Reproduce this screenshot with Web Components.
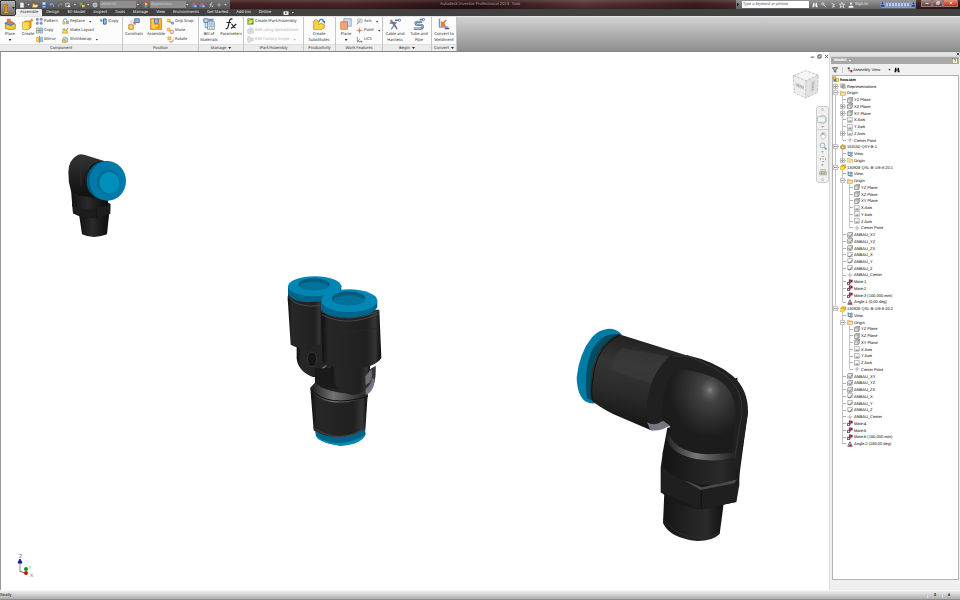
<!DOCTYPE html>
<html lang="en">
<head>
<meta charset="utf-8">
<title>Autodesk Inventor Professional 2013 - how</title>
<style>
html,body{margin:0;height:100%;overflow:hidden}
body{font:4px/5px "Noto Sans","Open Sans",sans-serif;color:#2c2c2c;text-rendering:geometricPrecision;background:#fff}
</style>
</head>
<body>
<inventor-app></inventor-app>
<script>
const ICONS = {
  logo:'<path d="M3 2h7l-1 3v7l3 3H4l1-3V5z" fill="#ffc52e" stroke="#8d5a0a"/><path d="M6 2h4L8 5v8l4 2H8l-2-3z" fill="#d18412"/>',
  page:'<path d="M3 1h7l3 3v11H3z" fill="#f4f4f4" stroke="#777"/>',
  open:'<path d="M1 4h5l1 2h7v8H1z" fill="#e5b64e" stroke="#76602d"/><path d="M3 8h13l-3 6H1z" fill="#f4dc9b"/>',
  save:'<path d="M1 1h14v14H1z" fill="#3868b0"/><path d="M4 1h8v6H4z" fill="#eef"/><path d="M4 10h8v5H4z" fill="#aac"/>',
  undo:'<path d="M3 7c4-5 11-2 9 6" fill="none" stroke="#67a6e8" stroke-width="3"/><path d="M0 8l6-6v8z" fill="#67a6e8"/>',
  redo:'<path d="M13 7C9 2 2 5 4 13" fill="none" stroke="#888" stroke-width="3"/><path d="M16 8l-6-6v8z" fill="#888"/>',
  cursor:'<path d="M2 3h9v9H2z" fill="none" stroke="#ddd" stroke-width="2"/><path d="M8 7l7 5-4 1-1 3z" fill="#fff"/>',
  local:'<path d="M2 2h7v7H2z" fill="#6cb24a"/><path d="M8 8h7v6H8z" fill="#f1c740"/>',
  ball:'<circle cx="8" cy="8" r="6" fill="#b9c4ce" stroke="#eee"/><path d="M8 2v12M2 8h12" stroke="#687887"/>',
  wheel:'<circle cx="8" cy="8" r="7" fill="#e5483f"/><path d="M8 8V1a7 7 0 0 1 7 7z" fill="#f3c92c"/><path d="M8 8h7a7 7 0 0 1-7 7z" fill="#51b84e"/><path d="M8 8v7a7 7 0 0 1-7-7z" fill="#3677d0"/>',
  wheelb:'<circle cx="8" cy="6" r="5" fill="#d8574e"/><path d="M1 7h8v7H1z" fill="#4a83cf"/><path d="M9 9h6v5H9z" fill="#9fc3ee"/>',
  fxw:'<path d="M12 2c-4-1-4 2-5 6s-1 6-4 6M4 6h7M9 9l5 5M14 9l-5 5" fill="none" stroke="#ddd" stroke-width="1.5"/>',
  plus:'<path d="M8 3v10M3 8h10" stroke="#bbb" stroke-width="2"/>',
  place:'<path d="M2 8l5-2 8 2v6l-6 2-7-2z" fill="#f0c63f" stroke="#a6771d"/><path d="M1 7l5-3 8 3-5 3z" fill="#5c9de0" stroke="#326aa9"/><path d="M4 1h5v3l3 1-4 3-4-4z" fill="#ec7834"/>',
  create:'<path d="M1 6l4-2h7v8l-3 3H1z" fill="#e7aa20" stroke="#aa7a12"/><path d="M1 6h8v9H1z" fill="#ffdc4b"/><path d="M13 0l1 2 2 1-2 1-1 2-1-2-2-1 2-1z" fill="#ff8b27"/>',
  pattern:'<g fill="#b7d1ef" stroke="#3569a9" stroke-width="1.5"><path d="M1 1h4v4H1zM10 1h4v4h-4zM1 10h4v4H1zM10 10h4v4h-4z"/></g><path d="M6 3h3M3 6v3M12 6v3M6 12h3" stroke="#f0a323"/>',
  copy:'<path d="M1 2h6v12H1z" fill="#f8dd66" stroke="#3569a9"/><path d="M9 2h6v12H9z" fill="#bdd7f4" stroke="#3569a9"/><path d="M1 8h14" stroke="#3569a9"/>',
  mirror:'<path d="M1 3h5v10H1z" fill="#ffd43b" stroke="#cf832b"/><path d="M10 3h5v10h-5z" fill="#a9cbed" stroke="#3d73b1"/><path d="M8 0v16" stroke="#ce3c2c" stroke-width="1.5"/>',
  replace:'<path d="M2 8h5v6H2z" fill="#ffce37" stroke="#b3821f"/><path d="M10 7h5v6h-5z" fill="#9dc4ec" stroke="#386da7"/><path d="M3 6c1-6 8-5 8-1" fill="none" stroke="#3978bc" stroke-width="2"/>',
  layout:'<path d="M1 10l4-4 8 3v5H1z" fill="#ffd43b" stroke="#a77a1c"/><path d="M1 5h7M10 8l4-6" stroke="#4a9a3d" stroke-width="2"/>',
  shrink:'<path d="M2 5l4-3 7 3v8l-5 2-6-3z" fill="#bfd0df" stroke="#56728d"/><path d="M1 9h6v6H1z" fill="#ffd23a" stroke="#a77a1c"/>',
  icopy:'<path d="M2 2v5h4M8 2h6v12H8z" fill="#9fc1e6" stroke="#295b9d" stroke-width="2"/>',
  constrain:'<path d="M1 9h6v6H1z" fill="#ffd54a" stroke="#a77d21"/><path d="M9 1h6v5H9z" fill="#91b9e7" stroke="#2c63a6"/><path d="M4 9V4h5" fill="none" stroke="#9db9d8" stroke-width="1"/><path d="M6 6l4-1v5z" fill="#ea5d23"/>',
  assemble:'<path d="M1 1h5v4h5V1h4v14H1z" fill="#ffd43b" stroke="#d4782a" stroke-width="1.5"/><path d="M6 1h5v6H6z" fill="#8db8ea" stroke="#3e73b4"/><path d="M5 8h7v5H7" fill="none" stroke="#ee6a25" stroke-width="1.5"/>',
  grip:'<path d="M1 3h6v6H1z" fill="#ffd43b" stroke="#b0821f"/><path d="M10 9h5v5h-5z" fill="#93bce7" stroke="#316aa8"/><path d="M6 7l4 4" stroke="#cb3c30" stroke-width="2"/>',
  move:'<path d="M1 3h6v6H1z" fill="#ffd43b" stroke="#b0821f"/><circle cx="11" cy="11" r="4" fill="#f9eaea" stroke="#d05349" stroke-width="1.5"/>',
  rotate:'<path d="M2 2h7v6H2z" fill="#ffd43b" stroke="#b0821f"/><path d="M5 11c3 5 9 3 9-3" fill="none" stroke="#d05349" stroke-width="2"/>',
  bom:'<path d="M1 1h6v5H1z" fill="#b5cee9" stroke="#466f9f"/><path d="M3 6v7h3" fill="none" stroke="#466f9f"/><path d="M6 5h9v10H6z" fill="#fff" stroke="#58799e"/><path d="M6 8h9M6 11h9M9 5v10M12 5v10" stroke="#7f9bb9"/><path d="M8 1h6v3H8z" fill="#6896cc"/>',
  fx:'<path d="M10 1.500C6 0 6 4 5 8s-1 7-4 6M2 6h6M8 8c3-1 2 6 6 5M15 8l-7 6" fill="none" stroke="#222" stroke-width="1.500"/>',
  ipart:'<path d="M1 1h14v14H1z" fill="#3f9435"/><path d="M3 8l4-4h6v5l-4 4H3z" fill="#f3d94a"/><path d="M3 3h3v2H3z" fill="#fff"/>',
  sheet:'<path d="M2 5h12v9H2zM5 2h6v3" fill="#eee" stroke="#bbb" stroke-width="1.5"/><circle cx="8" cy="9" r="3" fill="#ccc"/>',
  scope:'<path d="M2 2h5v12H2zM9 5h5v6H9z" fill="#eee" stroke="#bbb" stroke-width="1.5"/>',
  subst:'<path d="M1 4l3-2 3 2v5l4-2 4 2v4l-5 3H2l-1-1z" fill="#ffd43b" stroke="#b38319"/><path d="M8 5c1-4 5-4 6-1" fill="none" stroke="#3574be" stroke-width="1.7"/><path d="M12 4h4v4z" fill="#3574be"/>',
  planeb:'<path d="M5 1h10v10H5z" fill="#c9ddf3" stroke="#7b99bb"/><path d="M1 5h9v10H1z" fill="#f59b63" fill-opacity=".85" stroke="#cf6e35"/>',
  axisb:'<path d="M4 2h10v9H4z" fill="#dbe7f4" stroke="#7d96b2"/><path d="M2 15L10 4" stroke="#e0702e" stroke-width="1.800"/>',
  pointb:'<path d="M8 1v14M1 8h14" stroke="#e98b4d" stroke-width="1.6"/><path d="M8 4l4 4-4 4-4-4z" fill="#e47c3a"/>',
  ucs:'<path d="M3 2v11h11" fill="none" stroke="#3267b2" stroke-width="1.5"/><path d="M3 13l6-6" stroke="#39983e" stroke-width="1.5"/><path d="M11 10l4 3-4 2z" fill="#d33b2c"/>',
  cable:'<path d="M2 3l9 12M10 5L3 15M1 7l6-1 2 2" fill="none" stroke="#667b92" stroke-width="1.700"/><path d="M3 2l7 10" stroke="#a94a8c"/><path d="M8 3h5" stroke="#3a75bb" stroke-width="2"/><circle cx="14" cy="3" r="1.500" fill="#fff" stroke="#2866b1"/>',
  tube:'<path d="M12 5H6c-4 0-3 4 0 4h4c4 0 4 5 0 5H1" fill="none" stroke="#566e87" stroke-width="3"/><path d="M12 5H6c-4 0-3 4 0 4h4c4 0 4 5 0 5H1" fill="none" stroke="#c9dae9"/><path d="M9 2h5" stroke="#3a75bb" stroke-width="2"/><circle cx="14" cy="2" r="1.500" fill="#fff" stroke="#2866b1"/>',
  weld:'<path d="M2 1v11h11" fill="none" stroke="#8398ad" stroke-width="2"/><path d="M4 5l6 6M11 3L6 8" stroke="#df572b" stroke-width="1.500"/><path d="M4 6h5v5H4z" fill="#ee7833"/><path d="M9 14h6" stroke="#7144a3" stroke-width="2"/>',
  video:'<rect x="1" y="3" width="14" height="10" rx="2" fill="#e6e6e6"/><path d="M6 5l5 3-5 3z" fill="#444"/>',
  bino:'<path d="M3 2h3l1 5h2l1-5h3l2 12H10V9H6v5H1z" fill="currentColor"/>',
  key:'<circle cx="5" cy="5" r="3" fill="none" stroke="#eee" stroke-width="2"/><path d="M7 7l7 7" stroke="#eee" stroke-width="2.500"/>',
  sat:'<path d="M4 3l8 4-5 3 5 2-6 2" fill="none" stroke="#eee" stroke-width="2"/>',
  star:'<path d="M8 1l2 5h5l-4 3 2 6-5-3-5 3 2-6-4-3h5z" fill="none" stroke="#eee" stroke-width="2"/>',
  user:'<circle cx="8" cy="4" r="3" fill="currentColor"/><path d="M1 15c0-8 14-8 14 0z" fill="currentColor"/>',
  funnel:'<path d="M1 2h14l-5 6v6l-4-2V8z" fill="#ddd" stroke="#333" stroke-width="2"/>',
  asmview:'<path d="M2 1h5v5H2z" fill="#444"/><path d="M5 6v4h4" fill="none" stroke="#555" stroke-width="1.500"/><path d="M9 8h5v6H9z" fill="#a51c30"/>',
  help:'<rect x="1" y="1" width="14" height="14" fill="#fff6c6" stroke="#555"/><path d="M5 5c1-3 6-2 5 1l-2 2v2M8 12v1" fill="none" stroke="#333" stroke-width="1.500"/>',
  asm:'<path d="M1 2h7v7H1z" fill="#f6bd28" stroke="#8e6412"/><path d="M1 9h7v6H1z" fill="#4d79ad"/><path d="M8 7h7v8H8z" fill="#ffd738" stroke="#8e6412"/>',
  rep:'<path d="M1 2h10v10H1z" fill="#f0dfb1" stroke="#8a7447"/><path d="M5 5h9v9H5z" fill="#b9c8db" stroke="#65584a"/><path d="M8 7v5" stroke="#7d3e20" stroke-width="2"/>',
  folder:'<path d="M1 3h5l2 2h7v9H1z" fill="#f5d18c" stroke="#b88632"/><path d="M4 7h12l-3 7H1z" fill="#ffeab9" stroke="#b88632"/>',
  closed:'<path d="M1 3h5l2 2h7v9H1z" fill="#f6d79e" stroke="#c09048"/>',
  plane:'<path d="M5 1h10v9l-4 5H1V5z" fill="#dedede" stroke="#666" stroke-width="1.500"/><path d="M1 5h10v10M11 5l4-4" fill="none" stroke="#666" stroke-width="1.500"/>',
  axis:'<path d="M1 1h13v13H1z" fill="#f7f7f7" stroke="#888" stroke-width="1.500"/><path d="M4 11h8" stroke="#444" stroke-width="2"/>',
  point:'<path d="M8 1v14M1 8h14" stroke="#999" stroke-width="1.500"/><path d="M6 6h4v4H6z" fill="#fff" stroke="#888"/>',
  part:'<path d="M1 6l5-4h9v7l-5 6H1z" fill="#f5a81c" stroke="#b8740c"/><path d="M1 7h9v8H1z" fill="#ffe13f"/>',
  multi:'<path d="M1 5l6-4 8 4v6l-7 4-7-4z" fill="#f1b830" stroke="#80591a"/><path d="M4 6h7v6H4z" fill="#ece6cc" stroke="#7b6230"/>',
  view:'<path d="M3 1v11h5M3 5h6" fill="none" stroke="#2a5f8c" stroke-width="2"/><path d="M9 3h5v4H9zM8 10h6v4H8z" fill="#b7d7ea" stroke="#37627f" stroke-width="1.500"/>',
  wplane:'<path d="M4 1h11v9l-3 4H1V5z" fill="#e2e2e2" stroke="#666" stroke-width="1.500"/><path d="M4 8l4 5 6-9" fill="none" stroke="#666" stroke-width="1.800"/>',
  waxis:'<path d="M2 1h12v11H2z" fill="#f7f7f7" stroke="#888" stroke-width="1.500"/><path d="M3 10l4 4 7-9" fill="none" stroke="#444" stroke-width="1.800"/>',
  mate:'<path d="M1 9h6v6H1z" fill="#fff" stroke="#222" stroke-width="2"/><path d="M5 1h5v11H5z" fill="#c3183a"/><path d="M10 2h5v7h-5z" fill="#343c6b"/>',
  angle:'<path d="M2 14L8 2l6 12z" fill="#fff" stroke="#333a68" stroke-width="2"/><path d="M8 7l6 7H4z" fill="#d32a3d"/>',
  orbit:'<circle cx="8" cy="8" r="6" fill="#e9f0ea" stroke="#a5b4b4"/><path d="M1 4h11v8H1z" fill="#f3f8f5" stroke="#9fb8ac"/>',
  hand:'<path d="M3 8V5l2 2V2h2v4-5h2v5l1-4h2l-1 5 2-1 1 1-4 7H6z" fill="#fff" stroke="#999"/>',
  mag:'<circle cx="7" cy="7" r="5" fill="#e3eef7" stroke="#93a0ad" stroke-width="1.500"/><path d="M11 11l4 4" stroke="#888" stroke-width="2.500"/>',
  cross:'<path d="M8 1l3 3H5zM8 15l-3-3h6zM1 8l3-3v6zM15 8l-3 3V5z" fill="#aaa"/><circle cx="8" cy="8" r="2" fill="#ccc"/>',
  face:'<path d="M3 3h10v4H3z" fill="#d8dfa6" stroke="#aaa"/><path d="M1 7h14v7H1z" fill="#c0cc93" stroke="#aaa"/><path d="M4 9h3v3H4zM9 9h3v3H9z" fill="#99a"/>',
  min:'<path d="M2 10h12" stroke="currentColor" stroke-width="3"/>',
  max:'<path d="M5 2h9v9H5zM2 5h9v9H2z" fill="none" stroke="currentColor" stroke-width="2"/>',
  close:'<path d="M3 3l10 10M13 3L3 13" stroke="currentColor" stroke-width="3"/>'
};

function define(name, css, html){
  customElements.define(name, class extends HTMLElement{
    connectedCallback(){
      if(this.shadowRoot) return;
      const root = this.attachShadow({mode:'open'});
      root.innerHTML = `<style>*{box-sizing:border-box}button,input,select{font:inherit;color:inherit;margin:0;padding:0;border:0;background:none;border-radius:0;outline:0;text-rendering:inherit;min-width:0}${css}</style>${typeof html === 'function' ? html(this) : html}`;
    }
  });
}

define('ui-icon', ':host{display:block;flex:none;width:var(--s,6px);height:var(--s,6px)}svg{display:block;width:100%;height:100%}',
  el => `<svg viewBox="0 0 16 16" aria-hidden="true">${ICONS[el.getAttribute('name')] || ''}</svg>`);

define('drop-arrow', ':host{display:block;flex:none;width:3px;height:2px;background:currentColor;clip-path:polygon(0 0,100% 0,50% 100%)}', '');

define('big-button', `
  :host{display:block;flex:none;width:var(--w,20px)}
  button{display:flex;flex-direction:column;align-items:center;width:100%;padding-top:1px;white-space:nowrap}
  ui-icon{--s:12px;margin-bottom:2px}
  .t{display:block;text-align:center;line-height:6px}
  drop-arrow{margin-top:1px}`,
  el => `<button><ui-icon name="${el.getAttribute('icon')}"></ui-icon><span class="t"><slot></slot></span>${el.hasAttribute('menu') ? '<drop-arrow></drop-arrow>' : ''}</button>`);

define('small-button', `
  :host{display:block}
  button{display:flex;align-items:center;gap:1px;height:9px;white-space:nowrap}
  button:disabled{color:#b4b4b4}
  ui-icon{--s:7px}
  drop-arrow{margin-left:3px}`,
  el => `<button ${el.hasAttribute('off') ? 'disabled' : ''}><ui-icon name="${el.getAttribute('icon')}"></ui-icon><slot></slot>${el.hasAttribute('menu') ? '<drop-arrow></drop-arrow>' : ''}</button>`);

define('ribbon-column', ':host{display:flex;flex-direction:column;flex:none;width:var(--w,auto)}', '<slot></slot>');

define('ribbon-panel', `
  :host{display:flex;flex-direction:column;flex:none;width:var(--w);background:#fcfcfc;border-right:1px solid #c6c6c6}
  .body{display:flex;flex:1;min-height:0}
  .label{display:flex;justify-content:center;align-items:center;gap:2px;height:7px;background:#ebebeb;border-top:1px solid #dedede}`,
  el => `<div class="body"><slot></slot></div><div class="label">${el.getAttribute('label')}${el.hasAttribute('menu') ? '<drop-arrow></drop-arrow>' : ''}</div>`);

define('ribbon-bar', `
  :host{display:flex;height:36px;background:linear-gradient(#d2d2d2,#8f8f8f);border-top:1px solid #e4e4e4;border-bottom:1px solid #868686}`,
  `<ribbon-panel label="Component" style="--w:123px">
    <big-button icon="place" menu style="--w:20px">Place</big-button><big-button icon="create" style="--w:16px">Create</big-button>
    <ribbon-column style="--w:26px"><small-button icon="pattern">Pattern</small-button><small-button icon="copy">Copy</small-button><small-button icon="mirror">Mirror</small-button></ribbon-column>
    <ribbon-column style="--w:38px"><small-button icon="replace" menu>Replace</small-button><small-button icon="layout">Make Layout</small-button><small-button icon="shrink" menu>Shrinkwrap</small-button></ribbon-column>
    <ribbon-column><small-button icon="icopy">iCopy</small-button></ribbon-column>
  </ribbon-panel>
  <ribbon-panel label="Position" style="--w:76px">
    <big-button icon="constrain" style="--w:22px">Constrain</big-button><big-button icon="assemble" style="--w:22px">Assemble</big-button>
    <ribbon-column><small-button icon="grip">Grip Snap</small-button><small-button icon="move">Move</small-button><small-button icon="rotate">Rotate</small-button></ribbon-column>
  </ribbon-panel>
  <ribbon-panel label="Manage" menu style="--w:45px">
    <big-button icon="bom" style="--w:20px">Bill of<br>Materials</big-button><big-button icon="fx" style="--w:24px">Parameters</big-button>
  </ribbon-panel>
  <ribbon-panel label="iPart/Assembly" style="--w:60px">
    <ribbon-column style="padding-left:3px"><small-button icon="ipart">Create iPart/Assembly</small-button><small-button icon="sheet" off>Edit using Spreadsheet</small-button><small-button icon="scope" off menu>Edit Factory Scope</small-button></ribbon-column>
  </ribbon-panel>
  <ribbon-panel label="Productivity" style="--w:32px"><big-button icon="subst" style="--w:30px">Create<br>Substitutes</big-button></ribbon-panel>
  <ribbon-panel label="Work Features" style="--w:47px">
    <big-button icon="planeb" menu style="--w:20px">Plane</big-button>
    <ribbon-column><small-button icon="axisb" menu>Axis</small-button><small-button icon="pointb" menu>Point</small-button><small-button icon="ucs">UCS</small-button></ribbon-column>
  </ribbon-panel>
  <ribbon-panel label="Begin" menu style="--w:49px"><big-button icon="cable" style="--w:24px">Cable and<br>Harness</big-button><big-button icon="tube" style="--w:24px">Tube and<br>Pipe</big-button></ribbon-panel>
  <ribbon-panel label="Convert" menu style="--w:25px"><big-button icon="weld" style="--w:24px">Convert to<br>Weldment</big-button></ribbon-panel>`);

define('title-bar', `
  :host{display:flex;align-items:center;height:9px;color:#ddd;background:linear-gradient(#fff2,#0000 40%,#0004),linear-gradient(90deg,#3b1a1c,#4a2526 35%,#281012 48%,#5a3636 60%,#3d1c1e 72%,#5c3937 80%,#3a1819)}
  .quick{display:flex;align-items:center;justify-content:space-between;width:214px;height:100%;padding:0 3px;background:linear-gradient(#777,#555)}
  .quick button{display:flex;align-items:center;gap:2px}
  select{appearance:none;height:7px;width:36px;padding-left:1px;background:#8e8e8e;color:#ccc;font-style:italic;line-height:7px}
  label{display:flex;align-items:center;gap:0}
  h1{flex:1;margin:0;padding-right:6px;font:inherit;color:#aaa1a1;text-align:center;white-space:pre}
  .info{display:flex;align-items:center;gap:3px;height:100%;width:180px;padding-left:1px;background:linear-gradient(#969696,#626262)}
  input{width:67px;height:7px;padding:0 1px;background:#fff;color:#444;font-style:italic}
  input::placeholder{color:#555;opacity:1}
  .go{width:2px;height:4px;background:#111;clip-path:polygon(0 0,100% 50%,0 100%)}
  .sign{display:flex;align-items:center;gap:1px;white-space:nowrap;color:#f2f2f2}
  .badge{display:flex;align-items:center;justify-content:space-between;width:36px;height:6px;margin-left:auto;border-radius:2px;background:#8499bd;color:#23497f}
  .badge ui-icon{--s:5px}.badge i{flex:1;height:3px;margin:0 1px;border-radius:2px;background:repeating-linear-gradient(90deg,#b9cae4 0 2px,#7893ba 2px 3px)}
  .win{display:flex;gap:0;padding:0 2px 2px 5px;color:#fff}
  .win button{display:grid;place-items:center;width:11px;height:7px;background:linear-gradient(#a98f8e,#5f4241);border:1px solid #927877;border-top:0}
  .win .x{width:15px;background:linear-gradient(#e1917f,#c62b13)}
  .win ui-icon{--s:4px}`,
  `<div class="quick">
    <button aria-label="New"><ui-icon name="page"></ui-icon><drop-arrow></drop-arrow></button><button aria-label="Open"><ui-icon name="open"></ui-icon></button><button aria-label="Save"><ui-icon name="save"></ui-icon></button><button aria-label="Undo"><ui-icon name="undo"></ui-icon></button><button aria-label="Redo"><ui-icon name="redo"></ui-icon></button><button aria-label="Select"><ui-icon name="cursor"></ui-icon><drop-arrow></drop-arrow></button><button aria-label="Update"><ui-icon name="local"></ui-icon><drop-arrow></drop-arrow></button><button aria-label="Sphere"><ui-icon name="ball"></ui-icon></button>
    <label><select aria-label="Material"><option>Material</option></select><drop-arrow></drop-arrow></label><button aria-label="Colour"><ui-icon name="wheel"></ui-icon></button>
    <label><select aria-label="Appearance"><option>Appearance</option></select><drop-arrow></drop-arrow></label><button aria-label="Adjust"><ui-icon name="wheelb"></ui-icon></button><button aria-label="Clear"><ui-icon name="wheelb"></ui-icon></button><button aria-label="Parameters"><ui-icon name="fxw"></ui-icon></button><button aria-label="Customize"><ui-icon name="plus"></ui-icon><drop-arrow></drop-arrow></button>
  </div>
  <h1>Autodesk Inventor Professional 2013   how</h1>
  <div class="info"><span class="go"></span><input aria-label="Search" placeholder="Type a keyword or phrase"><ui-icon name="bino" style="color:#eee"></ui-icon><ui-icon name="key"></ui-icon><ui-icon name="sat"></ui-icon><ui-icon name="star"></ui-icon><button class="sign"><ui-icon name="user"></ui-icon>Sign In</button><span class="badge"><ui-icon name="user"></ui-icon><i></i><ui-icon name="user"></ui-icon></span></div>
  <div class="win"><button aria-label="Minimize"><ui-icon name="min"></ui-icon></button><button aria-label="Restore"><ui-icon name="max"></ui-icon></button><button class="x" aria-label="Close"><ui-icon name="close"></ui-icon></button></div>`);

define('tab-strip', `
  :host{display:flex;align-items:stretch;height:7px;background:#414141;color:#f0f0f0}
  button{padding:0 4px;line-height:6px;display:flex;align-items:center;gap:2px}
  .on{background:#ededed;color:#222;border-radius:1px 1px 0 0}`,
  () => ['Assemble','Design','3D Model','Inspect','Tools','Manage','View','Environments','Get Started','Add-Ins','Online'].map((t,i)=>`<button${i?'':' class="on"'}>${t}</button>`).join('') + '<button style="margin-left:4px" aria-label="Video"><ui-icon name="video"></ui-icon><drop-arrow></drop-arrow></button>');

define('app-header', `
  :host{display:grid;grid-template-columns:16px 1fr;grid-template-rows:9px 7px}
  .app{grid-row:1/3;display:flex;align-items:center;justify-content:center;gap:0;background:linear-gradient(#b5b5b5,#6b6b6b);border:1px solid #333;border-radius:0 0 2px 0;color:#222}
  .app ui-icon{--s:11px}`,
  '<button class="app" aria-label="Application menu"><ui-icon name="logo"></ui-icon><drop-arrow></drop-arrow></button><title-bar></title-bar><tab-strip></tab-strip>');

const PARTS = {
  elbowSmall: ['45 36 195 264', `
    <defs><linearGradient id="a"><stop stop-color="#121212"/><stop offset=".45" stop-color="#2a2a2a"/><stop offset="1" stop-color="#0c0c0c"/></linearGradient><linearGradient id="b" x2="0" y2="1"><stop stop-color="#343434"/><stop offset="1" stop-color="#0d0d0d"/></linearGradient></defs>
    <path d="M86 215l10 68q34 16 75 0l7-68z" fill="url(#a)"/>
    <path d="M66 192l3 28 25 11 45 4 41-14 1-30-30-15z" fill="#171717"/><path d="M69 192q35 18 75 10l37-11v30l-42 13-45-3-25-11z" fill="#1d1d1d"/><path d="M139 204v30" stroke="#090909"/>
    <path d="M63 150l4 49q40 16 107-3v-48z" fill="url(#a)"/><path d="M63 152q38 17 110-3" fill="none" stroke="#333" stroke-width="2"/>
    <path d="M55 95Q56 60 80 47q8-8 25-2l65 20-8 116-42-9q-12-4-29-3l-28-15q-9-30-8-59z" fill="url(#b)"/>
    <path d="M80 49Q59 62 60 98M105 47q-18 20-12 90" fill="none" stroke="#303030" stroke-width="2"/>
    <ellipse cx="158" cy="122" rx="56" ry="58" fill="#111"/><path d="M118 73q-22 42-2 81M124 67q-24 45-4 93" fill="none" stroke="#333" stroke-width="2"/>
    <ellipse cx="166" cy="122" rx="56" ry="59" fill="#005c7d"/>
    <ellipse cx="173" cy="123" rx="55" ry="59" fill="#007aa8"/><ellipse cx="175" cy="125" rx="34" ry="36" fill="#006a90"/><ellipse cx="178" cy="128" rx="30" ry="32" fill="#008fbd"/>`],
  yPiece: ['45 24 300 525', `
    <defs><linearGradient id="a"><stop stop-color="#101010"/><stop offset=".12" stop-color="#272727"/><stop offset=".75" stop-color="#202020"/><stop offset=".9" stop-color="#353535"/><stop offset="1" stop-color="#0b0b0b"/></linearGradient><linearGradient id="m"><stop stop-color="#181818"/><stop offset=".4" stop-color="#747474"/><stop offset="1" stop-color="#1b1b1b"/></linearGradient></defs>
    <path d="M80 238v43q5 38 48 55h60v-95z" fill="url(#a)"/><path d="M55 85l-2 15 9 139q28 17 98 13V85z" fill="url(#a)"/>
    <path d="M54 94q22 36 102 28" fill="none" stroke="#494949" stroke-width="3"/>
    <path d="M54 65v20q8 24 57 27l52-4 51-25V61z" fill="#006489"/><ellipse cx="134" cy="64" rx="80" ry="30" fill="#0086b4"/><ellipse cx="132" cy="58" rx="47" ry="18" fill="#005d7e"/><ellipse cx="132" cy="63" rx="42" ry="13" fill="#00719a"/>
    <path d="M112 262q10-26 42-22l30 60-26 25-36-20z" fill="#252525"/><ellipse cx="126" cy="283" rx="14" ry="22" fill="#171717" stroke="#353535" stroke-width="3"/><path d="M147 315l25-18q-6 14-24 24z" fill="#74727c"/>
    <path d="M134 310h150l3 90H125l10-45z" fill="#1a1a1a"/>
    <path d="M121 368l10 128q70 54 155-1l8-120z" fill="url(#a)"/><path d="M121 368l15-16q30 38 150 34l8 6q-54 28-115 18-44-8-58-42z" fill="url(#m)"/><path d="M122 372q50 58 172 22" fill="none" stroke="#111" stroke-width="3"/>
    <path d="M284 322l33-20q3 58-20 76-10 12-26 13z" fill="#35343c"/><path d="M287 372q16-12 20-34l8 8q-6 38-28 44z" fill="#74747f"/>
    <path d="M183 301l2 30q10 52 62 59 40-3 47-34l8-62z" fill="url(#a)"/><path d="M304 312q6 20-4 40l-13 8-1-26z" fill="#6c6c78"/>
    <path d="M136 499q70 36 149-6l2 15q-12 30-77 34-60-8-73-31z" fill="#006285"/><path d="M137 514q70 42 149-5-15 31-76 33-59-7-73-28z" fill="#008ab8"/>
    <path d="M130 488q78 53 156 0" fill="none" stroke="#444" stroke-width="3"/>
    <path d="M154 137l3 153q19 20 83 21 76-2 94-32l-6-145z" fill="url(#a)"/><path d="M156 149q75 40 171-3M154 140q80 39 173-1" fill="none" stroke="#454545" stroke-width="3"/>
    <path d="M160 192q74 18 168-4" fill="none" stroke="#282828" stroke-width="2"/>
    <path d="M153 111v24q18 23 87 23 70-5 82-32v-21z" fill="#00658a"/><ellipse cx="238" cy="107" rx="84" ry="34" fill="#0087b5"/><ellipse cx="236" cy="100" rx="50" ry="21" fill="#005b7b"/><ellipse cx="236" cy="106" rx="45" ry="15" fill="#00719a"/>`],
  elbowLarge: ['30 36 525 648', `
    <defs><linearGradient id="a"><stop stop-color="#141414"/><stop offset=".35" stop-color="#202020"/><stop offset=".7" stop-color="#2a2a2a"/><stop offset="1" stop-color="#111"/></linearGradient><linearGradient id="b" x1=".35" y1="0" x2=".15" y2="1"><stop stop-color="#202020"/><stop offset=".3" stop-color="#353535"/><stop offset=".6" stop-color="#2a2a2a"/><stop offset="1" stop-color="#101010"/></linearGradient><radialGradient id="r" cx=".66" cy=".24" r=".55"><stop stop-color="#858585"/><stop offset=".08" stop-color="#626262"/><stop offset=".25" stop-color="#424242"/><stop offset=".65" stop-color="#2c2c2c"/><stop offset="1" stop-color="#1c1c1c"/></radialGradient><linearGradient id="m"><stop stop-color="#222"/><stop offset=".45" stop-color="#777"/><stop offset="1" stop-color="#252525"/></linearGradient></defs>
    <path d="M126 42q24-3 44 16L96 264q-18 4-33-4-26-16-28-72 8-75 46-121 20-22 45-25z" fill="#007ba4"/><path d="M150 58q-44-2-72 54-24 68-12 138l22 10 80-200z" fill="#004c63"/>
    <path d="M298 532l-4 92q21 46 102 54 45 1 68-21l13-99z" fill="url(#a)"/><path d="M294 612q40 56 111 56 41-1 58-17" fill="none" stroke="#2c2c2c" stroke-width="3"/>
    <path d="M294 407l-7 51v74q59 48 122 51l105-22 9-52v-44z" fill="#191919"/><path d="M290 457l121 63 111-25-9 66-104 22-121-51z" fill="#1f1f1f"/><path d="M409 524v58" stroke="#111" stroke-width="3"/><path d="M350 492l61 25 106-24-9 12-101 20z" fill="#4a4a4a"/>
    <path d="M307 338l-14 76 5 45q54 57 165 48l59-17 26-193z" fill="url(#a)"/>
    <path d="M315 331l3 55q42 48 156 37l45-24-2-212z" fill="#1e1e1e"/>
    <path d="M160 57Q98 88 82 160q-9 52-4 93 17 20 66 44l114 49q29-1 48-16l94-152-29-55z" fill="url(#b)"/>
    <path d="M173 99q-26 20-34 67l129 44 43-86z" fill="#3d3d3d" opacity=".5"/>
    <path d="M319 117l49 4Q450 140 500 180Q551 222 549 295L521 469L497 440L506 300Q480 200 334 170z" fill="#202020"/>
    <path d="M320 122l48 2Q440 150 485 184Q535 225 531 295L509 430" fill="none" stroke="#363636" stroke-width="3"/>
    <path d="M318 120q-61 53-72 140l3 57 32 26 81-30 15-138z" fill="#202020"/>
    <path d="M334 164q40-2 109 22 60 25 67 91l-6 139q-87 16-183-28l-6-55q-28 7-25-47 3-80 44-122z" fill="url(#r)"/>
    <path d="M308 354l7 10q24 50 115 54l76-4v14q-51 14-113 4-73-15-88-61z" fill="url(#m)"/>
    <path d="M246 321q20 15 48-4l20 14q-25 19-58 15z" fill="#777681"/>
    <path d="M164 60q-70 34-80 129-9 48 2 73" fill="none" stroke="#111" stroke-width="3"/>`]
};
define('cad-part', ':host{position:absolute;display:block}svg{display:block;width:100%;height:100%}',
  el => {const [v,s] = PARTS[el.getAttribute('kind')]; return `<svg viewBox="${v}" role="img" aria-label="Fitting">${s}</svg>`;});

define('nav-bar', `
  :host{position:absolute;right:0;top:54px;width:13px;display:flex;flex-direction:column;align-items:center;padding:1px 0;gap:2px;background:#f0f0f0;border:1px solid #ccc;border-radius:3px;color:#aaa}
  ui-icon{--s:8px}button{display:flex;flex-direction:column;align-items:center;gap:1px}.first{border-bottom:1px solid #ccc;padding:1px 0}.o{width:3px;height:3px;border:1px solid #bbb;border-radius:50%}`,
  `<button class="o" aria-label="Close bar"></button><button class="first" aria-label="Wheel"><ui-icon name="orbit" style="--s:11px"></ui-icon><drop-arrow></drop-arrow></button><button aria-label="Pan"><ui-icon name="hand"></ui-icon></button><button aria-label="Zoom"><ui-icon name="mag"></ui-icon><drop-arrow></drop-arrow></button><button aria-label="Orbit"><ui-icon name="cross"></ui-icon><drop-arrow></drop-arrow></button><button aria-label="Look at"><ui-icon name="face"></ui-icon></button><button class="o" aria-label="Options"></button>`);

define('model-view', `
  :host{position:relative;display:block;flex:1;min-width:0;background:#fff;border-left:1px solid #999;overflow:hidden}
  .mdi{position:absolute;right:0;top:2px;display:flex;gap:2px;color:#555}.mdi ui-icon{--s:5px}
  .cube{position:absolute;right:8px;top:16px;width:30px;height:33px}
  .triad{position:absolute;left:14px;bottom:11px;width:22px;height:26px}
  text{font-family:"Liberation Sans",Arial,sans-serif}`,
  `<cad-part kind="elbowSmall" style="left:64px;top:100px;width:65px;height:88px"></cad-part>
  <cad-part kind="yPiece" style="left:284px;top:221px;width:100px;height:175px"></cad-part>
  <cad-part kind="elbowLarge" style="left:574px;top:275px;width:175px;height:216px"></cad-part>
  <div class="mdi"><button aria-label="Minimize"><ui-icon name="min"></ui-icon></button><button aria-label="Restore"><ui-icon name="max"></ui-icon></button><button aria-label="Close"><ui-icon name="close"></ui-icon></button></div>
  <svg class="cube" viewBox="0 0 90 99" aria-hidden="true"><path d="M7 23L44 8l38 13-3 52-35 17L10 74z" fill="#eee"/><path d="M7 23L44 8l38 13-37 17z" fill="#f5f5f5"/><path d="M45 38l37-17-3 52-35 17z" fill="#e2e2e2"/><path d="M7 23l38 15 37-17M45 38l-1 52M7 23L44 8l38 13-3 52-35 17L10 74z" fill="none" stroke="#c2c2c2" stroke-width="3" stroke-dasharray="8 4"/><path d="M14 43l25 10v13L15 56zM61 41l11-5-2 31-11 5z" fill="#d2d2d2"/><path d="M17 50l20 9M66 43l-1 25" stroke="#a5a5a5" stroke-width="4" stroke-dasharray="3 2"/></svg>
  <nav-bar></nav-bar>
  <svg class="triad" viewBox="0 0 22 26" aria-label="Axes"><path d="M5 19V7" stroke="#888"/><path d="M5 6l2 4H3z" fill="#16169a" stroke="#16169a"/><path d="M5 18l6 3" stroke="#a44"/><circle cx="11" cy="20" r="2" fill="#b51d1d"/><circle cx="11" cy="16" r="2" fill="#119022"/><text x="4" y="5" font-size="5" fill="#3030d0">Z</text><text x="13" y="16" font-size="5" fill="#38c548">Y</text><text x="15" y="24" font-size="5" fill="#c23a3a">X</text></svg>`);

const planes = l => [[l,'plane','YZ Plane'],[l,'plane','XZ Plane'],[l,'plane','XY Plane'],[l,'axis','X Axis'],[l,'axis','Y Axis'],[l,'axis','Z Axis'],[l,'point','Center Point']];
const anbau = ['XY','YZ','ZX','X','Y','Z','Center'].map((n,i)=>[2, i<3?'wplane':i<6?'waxis':'point', 'ANBAU_'+n]);
const ROWS = [
  [0,'asm','how.iam'],[1,'rep','Representations','+'],[1,'folder','Origin','-'],
  ...planes(2).map((r,i)=>[1,2,5].includes(i)?[...r,'+']:r),
  [1,'multi','153150 QSY-B-1','-'],[2,'view','View:'],[2,'closed','Origin','+'],
  [1,'part','130928 QSL-B-1/8-8-20:1','-'],[2,'view','View:'],[2,'folder','Origin','-'],...planes(3),...anbau,
  [2,'mate','Mate:1'],[2,'mate','Mate:2'],[2,'mate','Mate:3 (100,000 mm)'],[2,'angle','Angle:1 (0,00 deg)'],
  [1,'part','130928 QSL-B-1/8-8-20:2','-'],[2,'view','View:'],[2,'folder','Origin','-'],...planes(3),...anbau,
  [2,'mate','Mate:4'],[2,'mate','Mate:5'],[2,'mate','Mate:6 (150,000 mm)'],[2,'angle','Angle:2 (180,00 deg)']
];
const continues = (i,k) => {for(let j=i+1;j<ROWS.length;j++){if(ROWS[j][0]===k)return true;if(ROWS[j][0]<k)return false}return false};

define('tree-row', `
  :host{display:flex;align-items:center;min-height:0;white-space:nowrap}
  slot{display:block}
  ui-icon{margin-right:1px}
  .g{position:relative;flex:none;width:7px;align-self:stretch}
  .g::before{content:"";position:absolute;left:2px;top:0;bottom:0;width:1px}
  .v::before,.h::before{background:#c4c4c4}.end::before{bottom:50%}
  .h::after{content:"";position:absolute;left:3px;top:3px;width:3px;height:1px;background:#b0b0b0}
  .b{position:absolute;z-index:1;left:0;top:1px;width:5px;height:5px;border:1px solid #c4c4c4;background:linear-gradient(#999,#999) center/3px 1px no-repeat #fff}
  .b.plus{background:linear-gradient(#999,#999) center/3px 1px no-repeat,linear-gradient(#999,#999) center/1px 3px no-repeat #fff}`,
  el => {
    const i = +el.dataset.i, [level,icon,,box] = ROWS[i];
    let g = '';
    for(let k=1;k<=level;k++){
      const c = continues(i,k);
      g += k<level ? `<span class="g${c?' v':''}"></span>` : `<span class="g h${c?'':' end'}">${box?`<button class="b${box==='+'?' plus':''}" aria-label="Toggle"></button>`:''}</span>`;
    }
    return `${g}<ui-icon name="${icon}"></ui-icon><slot></slot>`;
  });

define('model-tree', `
  :host{display:block;flex:1;min-height:0;margin:0 1px 0 2px;background:#fff;border:1px solid #b2b2b2;overflow:hidden;font-family:"Liberation Sans",Arial,sans-serif;color:#000}
  .rows{display:grid;grid-template-rows:repeat(${ROWS.length},1fr);height:371px}
  tree-row:first-child{font-weight:bold}`,
  () => `<div class="rows" role="tree">${ROWS.map((r,i)=>`<tree-row role="treeitem" data-i="${i}">${r[2]}</tree-row>`).join('')}</div>`);

define('model-browser', `
  :host{display:flex;flex-direction:column;flex:none;width:131px;background:#f0f0f0;padding-bottom:10px;border-left:1px solid #ddd}
  .grip{display:flex;justify-content:flex-end;align-items:center;height:5px;border-bottom:1px solid #d5d5d5;color:#111;background:#e2e2e2}
  .grip ui-icon{--s:4px}
  header{display:flex;align-items:center;gap:2px;height:7px;margin:0 1px;padding:0 1px 0 3px;background:#a8a8a8;color:#fff;font-weight:bold}
  header ui-icon{margin-left:auto}
  .tools{display:flex;align-items:center;height:11px;padding-left:2px;gap:3px;color:#111;font-family:"Liberation Sans",Arial,sans-serif}
  .sep{width:1px;height:6px;background:#ccc;margin:0 1px}
  label{display:flex;align-items:center;gap:0}
  select{appearance:none;width:35px;height:7px;line-height:7px}`,
  `<div class="grip"><button aria-label="Close panel"><ui-icon name="close"></ui-icon></button></div>
  <header>Model<drop-arrow></drop-arrow><ui-icon name="help"></ui-icon></header>
  <div class="tools"><button aria-label="Filter"><ui-icon name="funnel"></ui-icon></button><span class="sep"></span><label><ui-icon name="asmview"></ui-icon><select aria-label="Browser view"><option>Assembly View</option></select><drop-arrow></drop-arrow></label><button aria-label="Find"><ui-icon name="bino"></ui-icon></button></div>
  <model-tree></model-tree>`);

define('status-bar', `
  :host{display:flex;align-items:center;height:10px;background:linear-gradient(#eee,#b0b0b0 85%,#777);border-top:1px solid #f6f6f6;color:#111;padding-right:5px}
  .r{margin-left:auto;width:15px;text-align:center;border-left:1px solid #ddd}.r+.r{margin-left:0;width:13px}b{font-weight:bold}`,
  '<span>Ready</span><b class="r">3</b><b class="r">4</b>');

define('inventor-app', `
  :host{display:flex;flex-direction:column;height:100vh}
  main{display:flex;flex:1;min-height:0}`,
  '<app-header></app-header><ribbon-bar></ribbon-bar><main><model-view></model-view><model-browser></model-browser></main><status-bar></status-bar>');
</script>
</body>
</html>
